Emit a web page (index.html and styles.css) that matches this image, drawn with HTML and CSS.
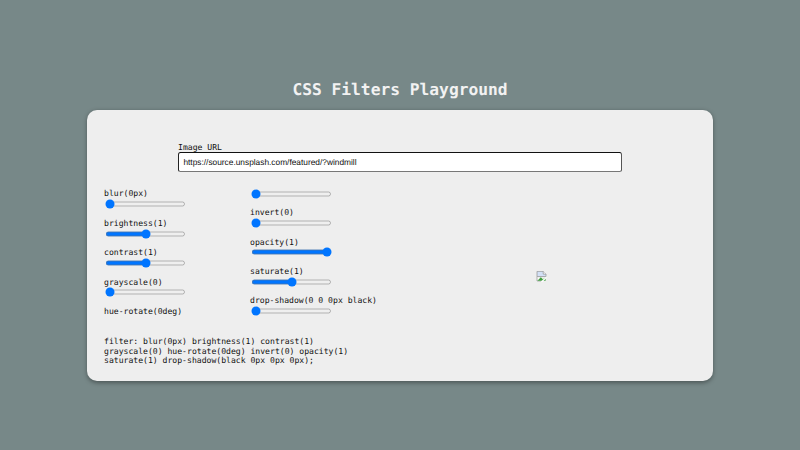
FILE: index.html
```html
<!DOCTYPE html>
<html lang="en">
<head>
<meta charset="utf-8">
<title>CSS Filters Playground</title>
<link rel="stylesheet" href="styles.css">
</head>
<body>
<h1 class="title">CSS Filters Playground</h1>
<main class="card">
  <div class="url">
    <label class="url-label" for="url">Image URL</label>
    <input class="url-input" id="url" type="text" value="https://source.unsplash.com/featured/?windmill">
  </div>
  <div class="body">
    <div class="left">
      <div class="controls">
        <label class="name">blur(0px)</label>
        <input class="slider" type="range" min="0" max="10" value="0">
        <label class="name">brightness(1)</label>
        <input class="slider" type="range" min="0" max="2" step="0.1" value="1">
        <label class="name">contrast(1)</label>
        <input class="slider" type="range" min="0" max="2" step="0.1" value="1">
        <label class="name">grayscale(0)</label>
        <input class="slider" type="range" min="0" max="1" step="0.1" value="0">
        <label class="name">hue-rotate(0deg)</label>
        <input class="slider" type="range" min="0" max="360" value="0">
        <label class="name">invert(0)</label>
        <input class="slider" type="range" min="0" max="1" step="0.1" value="0">
        <label class="name">opacity(1)</label>
        <input class="slider" type="range" min="0" max="1" step="0.1" value="1">
        <label class="name">saturate(1)</label>
        <input class="slider" type="range" min="0" max="2" step="0.1" value="1">
        <label class="name">drop-shadow(0 0 0px black)</label>
        <input class="slider" type="range" min="0" max="10" value="0">
      </div>
      <p class="output">filter: blur(0px) brightness(1) contrast(1) grayscale(0) hue-rotate(0deg) invert(0) opacity(1) saturate(1) drop-shadow(black 0px 0px 0px);</p>
    </div>
    <div class="preview">
      <svg class="broken" viewBox="0 0 16 16" width="11" height="11" role="img" aria-label="broken image">
        <path d="M1.5 .5H10.5L14.5 4.5V8H1.5Z" fill="#d3e0f6" stroke="#8f8f8f"/>
        <path d="M10.5 .5V4.5H14.5" fill="#fff" stroke="#8f8f8f"/>
        <path d="M1.5 8V14.5H8" fill="#fff" stroke="#8f8f8f"/>
        <path d="M2 14L7 9 10 12 14 9V14Z" fill="#3f9f3f"/>
        <path d="M8 16L15 9" stroke="#fff" stroke-width="2"/>
      </svg>
    </div>
  </div>
</main>
</body>
</html>
```
FILE: styles.css
```css
html, body {
  margin: 0;
}
html {
  background: #778888;
}
body {
  height: 450px;
  box-sizing: border-box;
  padding-top: 80px;
  display: flex;
  flex-direction: column;
  align-items: center;
  font-family: "DejaVu Sans Mono", monospace;
  text-rendering: geometricPrecision;
}
.title {
  margin: 0 0 11px;
  font-size: 16.25px;
  line-height: 19px;
  font-weight: 700;
  color: #f2f2f2;
}
.card {
  width: 626px;
  height: 271px;
  box-sizing: border-box;
  padding: 32.5px 17px 0;
  background: #eeeeee;
  border-radius: 10px;
  box-shadow: 0 1.5px 4px rgba(0, 0, 0, 0.35);
}
.url {
  width: 444px;
  margin: 0 auto 15.5px;
}
.url-label {
  display: block;
  font-size: 8.125px;
  line-height: 9.375px;
  color: #111;
}
.url-input {
  display: block;
  width: 100%;
  height: 20px;
  box-sizing: border-box;
  padding: 0 4.4px;
  border: 1px solid;
  border-color: #111 #555 #777 #222;
  border-radius: 2.5px;
  background: #fff;
  font-family: "Liberation Sans", Arial, sans-serif;
  font-size: 8.333px;
  text-rendering: geometricPrecision;
  color: #111;
}
.body {
  display: flex;
}
.left {
  width: 282px;
  flex: none;
}
.controls {
  display: flex;
  flex-direction: column;
  flex-wrap: wrap;
  align-content: flex-start;
  height: 139px;
}
.name {
  width: 146px;
  padding-top: 0.75px;
  font-size: 8.125px;
  line-height: 8.625px;
  color: #111;
}
.name:first-child {
  margin-top: 1.25px;
}
.slider {
  display: block;
  zoom: 0.625;
  width: 129px;
  margin: 2px 0 14px 2px;
}
.output {
  width: 262px;
  margin: 11px 0 0;
  font-size: 8.125px;
  line-height: 9.375px;
  color: #111;
}
.preview {
  flex: 1;
  display: flex;
  align-items: center;
  justify-content: center;
}
.broken {
  display: block;
}
```
